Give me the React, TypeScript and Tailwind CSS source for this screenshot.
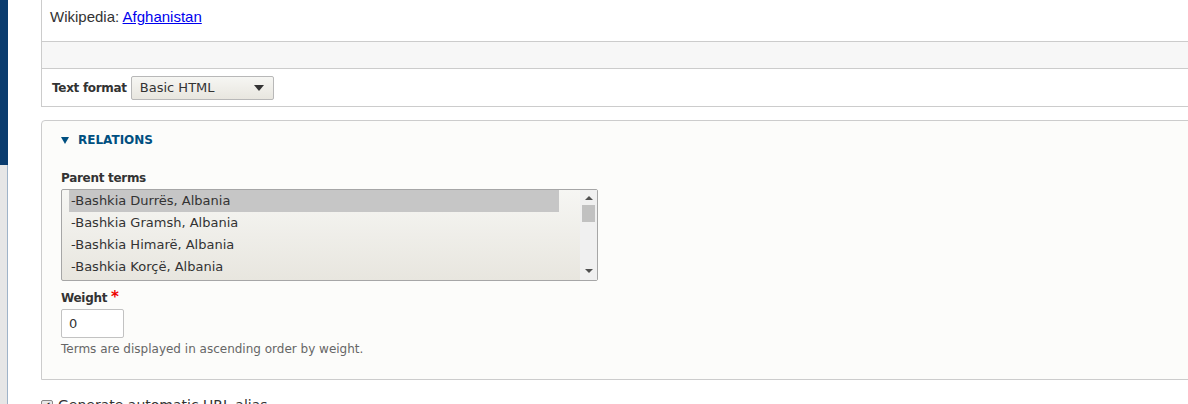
import React from 'react';

const terms = [
  '-Bashkia Durrës, Albania',
  '-Bashkia Gramsh, Albania',
  '-Bashkia Himarë, Albania',
  '-Bashkia Korçë, Albania',
];

const ui = { fontFamily: '"DejaVu Sans", "Liberation Sans", sans-serif' };

const App = () => {
  return (
    <div className="flex w-[1188px] h-[404px] overflow-hidden bg-white text-[#333]" style={ui}>
      {/* admin toolbar strip */}
      <div className="flex flex-col w-[8px] shrink-0">
        <div className="h-[165px] bg-[#0a3c6e]" />
        <div className="flex-1 bg-[#e6e6e6] border-r border-[#9fb3c8]" />
      </div>

      <div className="flex-1 pl-[33px] min-w-0">
        {/* body field + text format */}
        <div className="border-l border-b border-[#cccccc] w-[1200px]">
          <div className="h-[41px] pl-[8px] pt-[6px] text-[15px]" style={{ fontFamily: '"Liberation Sans", Arial, sans-serif' }}>
            Wikipedia: <a href="#" className="text-[#0000ee] underline">Afghanistan</a>
          </div>
          <div className="h-[28px] bg-[#f7f7f7] border-y border-[#cccccc]" />
          <div className="h-[37px] flex items-center pl-[10px] gap-[4px]">
            <span className="text-[12px] font-bold tracking-[-0.3px] text-[#333]">Text format</span>
            <div className="w-[143px] h-[24px] flex items-center justify-between pl-[8px] pr-[9px] border border-[#b8b8b8] rounded-[2px] bg-gradient-to-b from-[#f6f6f3] to-[#e8e6df] text-[13px]">
              <span>Basic HTML</span>
              <span className="w-0 h-0 border-x-[5px] border-x-transparent border-t-[6px] border-t-[#333]" />
            </div>
          </div>
        </div>

        {/* relations details */}
        <div className="mt-[13px] w-[1200px] h-[260px] border border-[#cccccc] rounded-tl-[4px] bg-[#fcfcfa] pl-[19px]">
          <div className="flex items-center gap-[9px] h-[38px]">
            <span className="w-0 h-0 border-x-[4px] border-x-transparent border-t-[7px] border-t-[#004f80]" />
            <span className="text-[12px] font-bold uppercase text-[#004f80]">Relations</span>
          </div>

          <div className="mt-[9px] leading-[20px] text-[12px] font-bold tracking-[-0.3px]">Parent terms</div>
          <div className="mt-[1px] w-[537px] h-[92px] flex border border-[#a6a6a6] rounded-[2px] bg-gradient-to-b from-[#f6f6f3] to-[#e8e6df]">
            <div className="flex-1 pl-[7px] pr-[21px]">
              {terms.map((t, i) => (
                <div
                  key={t}
                  className={`h-[22px] flex items-center pl-[2px] text-[13px] text-[#333] ${i === 0 ? 'bg-[#c6c6c6]' : ''}`}
                >
                  {t}
                </div>
              ))}
            </div>
            <div className="w-[17px] bg-[#f0f0f0] flex flex-col items-center">
              <span className="mt-[6px] w-0 h-0 border-x-[4px] border-x-transparent border-b-[4px] border-b-[#505050]" />
              <div className="mt-[5px] w-[13px] h-[17px] bg-[#c1c1c1]" />
              <div className="flex-1" />
              <span className="mb-[7px] w-0 h-0 border-x-[4px] border-x-transparent border-t-[4px] border-t-[#505050]" />
            </div>
          </div>

          <div className="mt-[6px] leading-[20px] text-[12px] font-bold tracking-[-0.3px]">
            Weight <span className="text-[#e00] text-[15px]">*</span>
          </div>
          <div className="mt-[1px] w-[63px] h-[29px] flex items-center pl-[7px] border border-[#c2c2c2] rounded-[2px] bg-white text-[13px]">
            0
          </div>
          <div className="mt-[2px] leading-[18px] text-[12px] text-[#666]">
            Terms are displayed in ascending order by weight.
          </div>
        </div>

        {/* url alias */}
        <div className="mt-[15px] flex items-center gap-[5px] text-[14px]">
          <span className="w-[12px] h-[12px] border border-[#888] rounded-[2px] bg-[#e8e8e8] flex items-center justify-center text-[10px] leading-none text-[#222]">
            ✔
          </span>
          <span>Generate automatic URL alias</span>
        </div>
      </div>
    </div>
  );
};

export default App;
